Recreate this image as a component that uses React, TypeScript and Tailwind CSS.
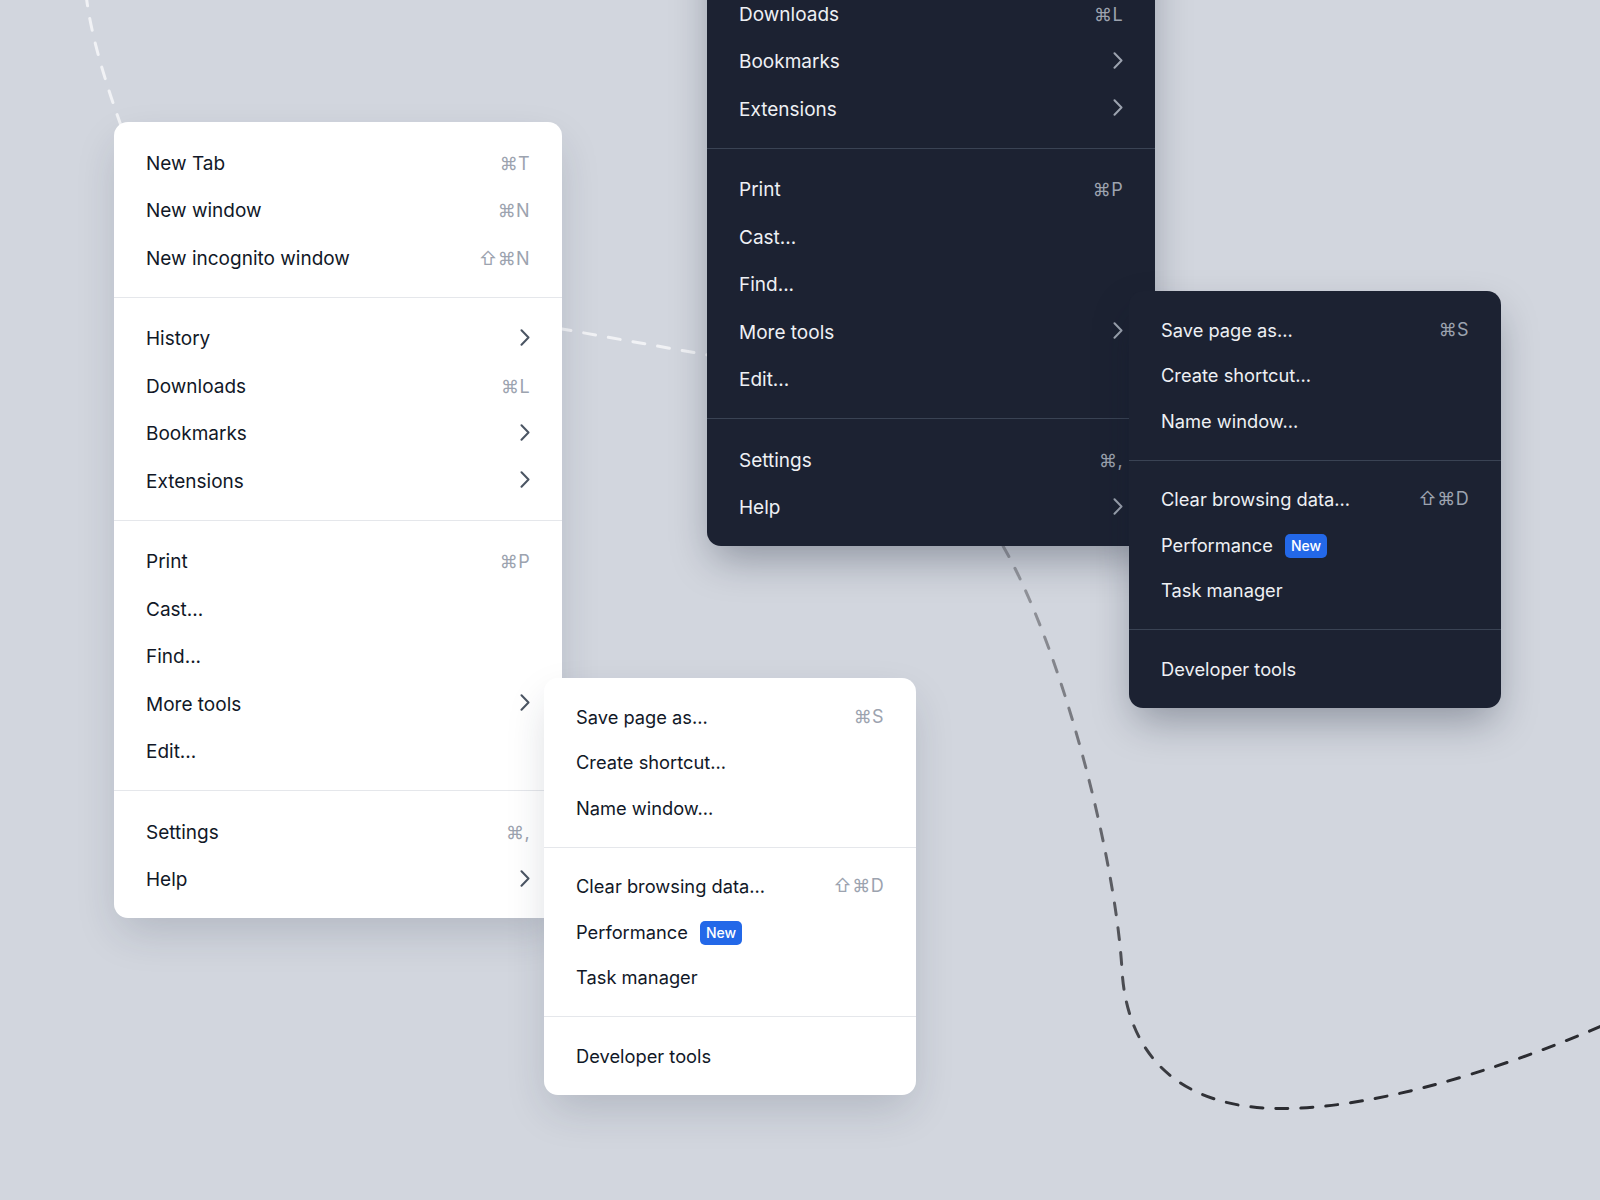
type Item = { label: string; shortcut?: string; submenu?: boolean; badge?: string };

const mainMenu: Item[][] = [
  [
    { label: 'New Tab', shortcut: '⌘T' },
    { label: 'New window', shortcut: '⌘N' },
    { label: 'New incognito window', shortcut: '⇧⌘N' },
  ],
  [
    { label: 'History', submenu: true },
    { label: 'Downloads', shortcut: '⌘L' },
    { label: 'Bookmarks', submenu: true },
    { label: 'Extensions', submenu: true },
  ],
  [
    { label: 'Print', shortcut: '⌘P' },
    { label: 'Cast...' },
    { label: 'Find...' },
    { label: 'More tools', submenu: true },
    { label: 'Edit...' },
  ],
  [
    { label: 'Settings', shortcut: '⌘,' },
    { label: 'Help', submenu: true },
  ],
];

const toolsMenu: Item[][] = [
  [
    { label: 'Save page as...', shortcut: '⌘S' },
    { label: 'Create shortcut...' },
    { label: 'Name window...' },
  ],
  [
    { label: 'Clear browsing data...', shortcut: '⇧⌘D' },
    { label: 'Performance', badge: 'New' },
    { label: 'Task manager' },
  ],
  [{ label: 'Developer tools' }],
];

function Chevron({ className }: { className: string }) {
  return (
    <svg width="10" height="17" viewBox="0 0 10 17" fill="none" className={className}>
      <path
        d="M1.5 1.25L8.5 8.5L1.5 15.75"
        stroke="currentColor"
        strokeWidth="2"
        strokeLinecap="round"
        strokeLinejoin="round"
      />
    </svg>
  );
}

interface MenuProps {
  groups: Item[][];
  dark?: boolean;
  rowClass: string;
  labelClass: string;
  className: string;
}

function Menu({ groups, dark = false, rowClass, labelClass, className }: MenuProps) {
  return (
    <div
      className={`absolute overflow-hidden rounded-[14px] ${
        dark
          ? 'bg-[#1c2232] text-[#eef0f4] shadow-[0_18px_40px_-6px_rgba(15,23,42,0.35)]'
          : 'bg-white text-[#111827] shadow-[0_18px_44px_-6px_rgba(30,41,59,0.18)]'
      } ${className}`}
    >
      {groups.map((group, gi) => (
        <div
          key={gi}
          className={`py-4 ${gi > 0 ? (dark ? 'border-t border-[#3a4354]' : 'border-t border-[#e5e7eb]') : ''}`}
        >
          {group.map((item) => (
            <div key={item.label} className={`flex items-center justify-between px-8 ${rowClass}`}>
              <div className="flex items-center gap-[12px]">
                <span className={`leading-6 ${labelClass}`}>{item.label}</span>
                {item.badge ? (
                  <span className="translate-y-[1px] rounded-[5px] bg-[#2368e8] px-[6px] text-[14px] font-medium leading-6 text-white">
                    {item.badge}
                  </span>
                ) : null}
              </div>
              {item.shortcut ? (
                <span className={`text-[18px] leading-6 tracking-[0.02em] text-[#9ca3af] ${labelClass.split(' ')[0]}`}>
                  <span className="text-[18px]">{item.shortcut}</span>
                </span>
              ) : item.submenu ? (
                <Chevron className={dark ? 'text-[#9ca3af]' : 'text-[#4b5563]'} />
              ) : null}
            </div>
          ))}
        </div>
      ))}
    </div>
  );
}

export default function App() {
  return (
    <div className="relative h-[1200px] w-[1600px] overflow-hidden bg-[#d2d6de] font-['Inter','Noto_Sans',sans-serif] antialiased">
      <svg className="pointer-events-none absolute inset-0" width="1600" height="1200" fill="none">
        <defs>
          <linearGradient id="trail" gradientUnits="userSpaceOnUse" x1="1000" y1="550" x2="1260" y2="1110">
            <stop offset="0" stopColor="#9a9ca3" />
            <stop offset="1" stopColor="#2b2c31" />
          </linearGradient>
        </defs>
        <path
          d="M86 -6 Q92 50 130 150 C187 300 400 300 562 329 L730 359"
          stroke="#f1f2f5"
          strokeWidth="3"
          strokeLinecap="round"
          strokeDasharray="12 13"
        />
        <path
          d="M990 525 C1055 620 1115 850 1122 970 C1127 1056 1180 1108.6 1282 1108.6 C1360 1108.6 1480 1080 1620 1018"
          stroke="url(#trail)"
          strokeWidth="3"
          strokeLinecap="round"
          strokeDasharray="12 13"
        />
      </svg>

      <Menu
        groups={mainMenu}
        rowClass="h-[47.5px]"
        labelClass="translate-y-[2px] text-[19px]"
        className="left-[114px] top-[122px] w-[448px]"
      />
      <Menu
        groups={toolsMenu}
        rowClass="h-[45.5px]"
        labelClass="translate-y-[0px] text-[18.3px]"
        className="left-[544px] top-[678px] w-[372px]"
      />

      <Menu
        groups={mainMenu}
        dark
        rowClass="h-[47.5px]"
        labelClass="translate-y-[2px] text-[19px]"
        className="left-[707px] top-[-250px] w-[448px]"
      />
      <Menu
        groups={toolsMenu}
        dark
        rowClass="h-[45.5px]"
        labelClass="translate-y-[0px] text-[18.3px]"
        className="left-[1129px] top-[291px] w-[372px]"
      />
    </div>
  );
}
